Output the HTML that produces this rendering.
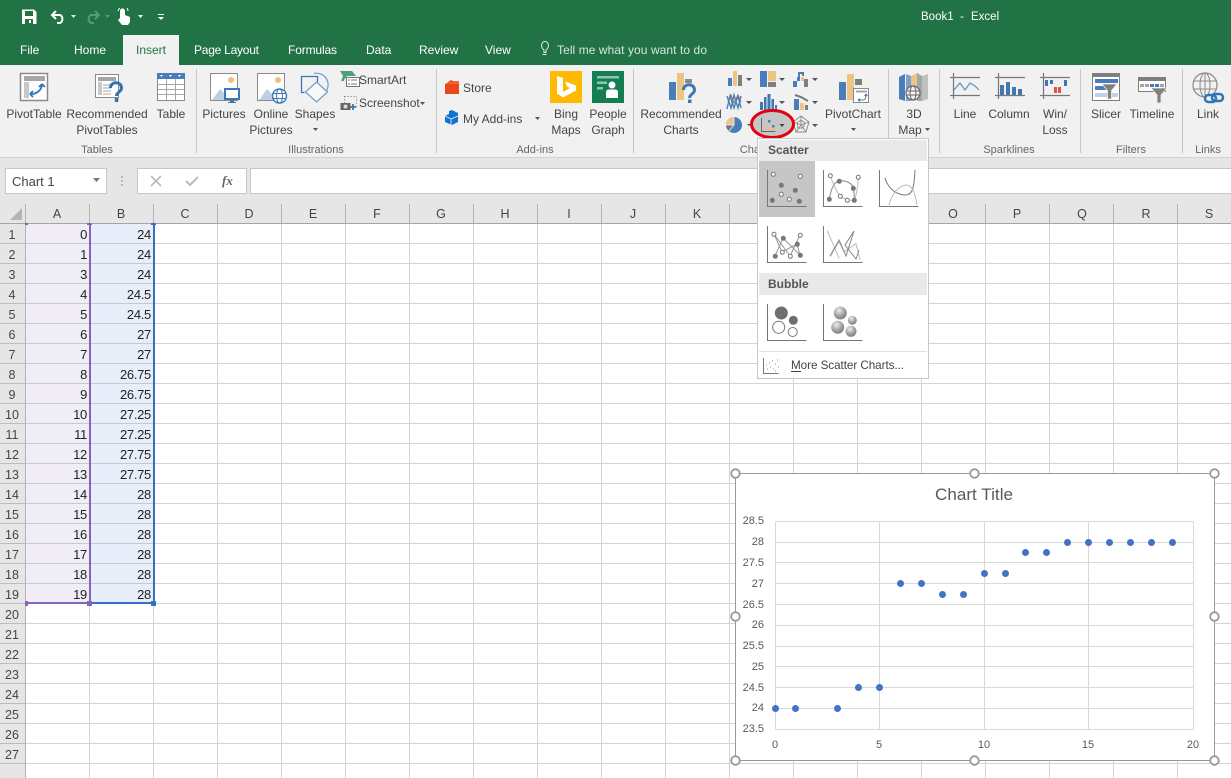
<!DOCTYPE html>
<html><head><meta charset="utf-8"><title>Book1 - Excel</title>
<style>
html,body{margin:0;padding:0;background:#fff;overflow:hidden}
svg{display:block;font-family:"Liberation Sans",sans-serif}
.r{font-size:12px;fill:#444}
.m{text-anchor:middle}
.g{font-size:11px;fill:#666;text-anchor:middle}
.t{font-size:12px;fill:#fff}
.h{font-size:12.5px;fill:#444;text-anchor:middle}
.rn{font-size:12.5px;fill:#444;text-anchor:middle}
.c{font-size:13px;fill:#222;text-anchor:end;letter-spacing:-.3px}
.y{font-size:11px;fill:#595959;text-anchor:end}
.x{font-size:11px;fill:#595959;text-anchor:middle}
.ar{fill:#555}
</style></head><body>
<svg width="1231" height="778" viewBox="0 0 1231 778" xmlns="http://www.w3.org/2000/svg">
<defs>
<radialGradient id="b3" cx=".4" cy=".3" r=".8"><stop offset="0" stop-color="#eee"/><stop offset=".6" stop-color="#999"/><stop offset="1" stop-color="#777"/></radialGradient>
</defs>
<rect width="1231" height="778" fill="#fff"/>
<!-- title bar -->
<rect width="1231" height="65" fill="#217346"/>
<rect x="123" y="35" width="56" height="30" fill="#f1f1f1"/>
<!-- QAT -->
<path d="M22 9.500h12l2.500 2.500v12h-14.500z" fill="#fff"/><rect x="25" y="11" width="8" height="5" fill="#217346"/><rect x="25" y="19" width="8" height="5" fill="#217346"/><rect x="29" y="20" width="2" height="3" fill="#fff"/>
<path d="M53 15h7a4.500 4.500 0 0 1 0 8h-3M56 11l-4 4 4 4" fill="none" stroke="#fff" stroke-width="2"/>
<path d="M71 15h5l-2.500 3z" fill="#dfeee6"/>
<path d="M98 15h-7a4.500 4.500 0 0 0 0 8h3M95 11l4 4-4 4" fill="none" stroke="#5b9a78" stroke-width="2"/>
<path d="M105 15h5l-2.500 3z" fill="#5b9a78"/>
<path d="M120 18v-7a2.500 2.500 0 0 1 5 0v4l5 2v5l-2 3h-6l-4-5z" fill="#fff"/><path d="M118 11a5 5 0 0 1 2-3M127 8a5 5 0 0 1 1 3" stroke="#fff" fill="none"/>
<path d="M138 15h5l-2.500 3z" fill="#fff"/>
<rect x="158" y="14" width="6" height="1" fill="#fff"/><path d="M158 17h6l-3 3z" fill="#fff"/>
<text x="921" y="20" font-size="11.500" fill="#fff">Book1</text><text x="960" y="20" font-size="11.500" fill="#fff">-</text><text x="971" y="20" font-size="11.500" fill="#fff">Excel</text>
<text class="t" x="20" y="54">File</text>
<text class="t" x="74" y="54">Home</text>
<text x="151" y="54" font-size="12" fill="#217346" text-anchor="middle">Insert</text>
<text class="t" x="194" y="54" textLength="65">Page Layout</text>
<text class="t" x="288" y="54" textLength="49">Formulas</text>
<text class="t" x="366" y="54">Data</text>
<text class="t" x="419" y="54">Review</text>
<text class="t" x="485" y="54">View</text>
<path d="M544.500 53v-2.500c-4-3-2.500-8.500 1-8.500s5 5.500 1 8.500V53z M543 55h4" fill="none" stroke="#dfeee6" transform="translate(-.5 -.5)"/>
<text x="557" y="54" font-size="12" fill="#d5e6dc" textLength="150">Tell me what you want to do</text>
<!-- ribbon -->
<rect y="65" width="1231" height="92" fill="#f1f1f1"/>
<rect y="157" width="1231" height="47" fill="#e6e6e6"/>
<rect y="157" width="1231" height="1" fill="#d2d2d2"/>
<path d="M196.500 69v84M436.500 69v84M633.500 69v84M888.500 69v84M939.500 69v84M1080.500 69v84M1182.500 69v84" stroke="#c6c6c6"/>
<!-- ribbon labels -->
<g class="r">
<text class="r m" x="34" y="118">PivotTable</text>
<text class="r m" x="107" y="118">Recommended</text><text class="r m" x="107" y="134">PivotTables</text>
<text class="r m" x="171" y="118">Table</text>
<text class="r m" x="224" y="118">Pictures</text>
<text class="r m" x="271" y="118">Online</text><text class="r m" x="271" y="134">Pictures</text>
<text class="r m" x="315" y="118">Shapes</text>
<text class="r" x="359" y="84">SmartArt</text>
<text class="r" x="359" y="107">Screenshot</text>
<text class="r" x="463" y="92">Store</text>
<text class="r" x="463" y="123">My Add-ins</text>
<text class="r m" x="566" y="118">Bing</text><text class="r m" x="566" y="134">Maps</text>
<text class="r m" x="608" y="118">People</text><text class="r m" x="608" y="134">Graph</text>
<text class="r m" x="681" y="118">Recommended</text><text class="r m" x="681" y="134">Charts</text>
<text class="r m" x="853" y="118">PivotChart</text>
<text class="r m" x="914" y="118">3D</text><text class="r m" x="910" y="134">Map</text>
<text class="r m" x="965" y="118">Line</text>
<text class="r m" x="1009" y="118">Column</text>
<text class="r m" x="1055" y="118">Win/</text><text class="r m" x="1055" y="134">Loss</text>
<text class="r m" x="1106" y="118">Slicer</text>
<text class="r m" x="1152" y="118">Timeline</text>
<text class="r m" x="1208" y="118">Link</text>
</g>
<text class="g" x="97" y="153">Tables</text>
<text class="g" x="316" y="153">Illustrations</text>
<text class="g" x="535" y="153">Add-ins</text>
<text class="g" x="756" y="153">Charts</text>
<text class="g" x="1009" y="153">Sparklines</text>
<text class="g" x="1131" y="153">Filters</text>
<text class="g" x="1208" y="153">Links</text>
<!-- small arrows -->
<path class="ar" d="M313 128h5l-2.500 3zM420 102h5l-2.500 3zM535 117h5l-2.500 3zM851 128h5l-2.500 3zM925 128h5l-2.500 3zM746 78h6l-3 3zM779 78h6l-3 3zM812 78h6l-3 3zM746 101h6l-3 3zM779 101h6l-3 3zM812 101h6l-3 3zM747 124h4l-2 2zM812 124h6l-3 3z"/>
<!-- PivotTable -->
<rect x="20.500" y="73.500" width="27" height="27" fill="#fff" stroke="#8a8a8a" stroke-width="1.500"/>
<rect x="24" y="76" width="21" height="5" fill="#a6a6a6"/><rect x="24" y="82" width="5" height="16" fill="#c8c8c8"/>
<path d="M31 94c5 0 10-3 11-9M30 94l3-3M30 94l3 3M42 84l-3 3M42 84l3 3" fill="none" stroke="#2e75b6" stroke-width="1.800"/>
<!-- Recommended Pivot -->
<rect x="95.500" y="74.500" width="23" height="23" fill="#fff" stroke="#8a8a8a"/>
<rect x="98" y="77" width="18" height="4" fill="#a6a6a6"/><rect x="98" y="82" width="4" height="13" fill="#c8c8c8"/><path d="M103 85h10M103 88h8M103 91h8M103 94h8" stroke="#a6a6a6"/>
<path d="M110.500 88c0-7 11-7 11 0 0 4-5 4-5 8" fill="none" stroke="#2e75b6" stroke-width="3"/><rect x="114.800" y="98" width="3.500" height="4" fill="#2e75b6"/>
<!-- Table -->
<rect x="157.500" y="73.500" width="27" height="27" fill="#fff" stroke="#8a8a8a"/>
<rect x="157" y="73" width="28" height="6" fill="#4a7ebb"/><path d="M160 75h3l-1.500 2zM169 75h3l-1.500 2zM178 75h3l-1.500 2z" fill="#fff"/>
<path d="M158 84.500h26M158 89.500h26M158 94.500h26M166.500 79v21M175.500 79v21" stroke="#a6a6a6"/>
<!-- Pictures -->
<rect x="210.500" y="73.500" width="27" height="27" fill="#fff" stroke="#8a8a8a"/>
<circle cx="231" cy="80" r="3" fill="#ecbf7c"/><path d="M212 100l8-11 5 5 2 2v4z" fill="#bccfe4"/>
<rect x="225" y="89" width="14" height="10" fill="#fff" stroke="#3f77b5" stroke-width="2"/><rect x="230" y="100" width="4" height="2" fill="#3f77b5"/><rect x="228" y="102" width="8" height="1" fill="#3f77b5"/>
<!-- Online -->
<rect x="257.500" y="73.500" width="27" height="27" fill="#fff" stroke="#8a8a8a"/>
<circle cx="278" cy="80" r="3" fill="#ecbf7c"/><path d="M259 100l8-11 5 5 2 2v4z" fill="#bccfe4"/>
<circle cx="279.500" cy="96" r="7" fill="#fff" stroke="#3f77b5" stroke-width="1.400"/><ellipse cx="279.500" cy="96" rx="3" ry="7" fill="none" stroke="#3f77b5"/><path d="M272.500 93.500h14M272.500 98.500h14" stroke="#3f77b5"/>
<!-- Shapes -->
<path d="M314 73.500a11.500 11.500 0 0 1 11.500 18.500" fill="none" stroke="#6d9bcf" stroke-width="1.200"/>
<path d="M317.500 82v-5.500H301.500V92.500h3" fill="none" stroke="#3f77b5" stroke-width="1.300"/>
<path d="M316.500 82l11 10-11 10-11-10z" fill="#f8f8f8" stroke="#6d9bcf" stroke-width="1.200"/>
<!-- SmartArt -->
<path d="M340 71h12l4 5h-9l-3 4v1h-3l2-5z" fill="#4aa37d"/>
<rect x="346.500" y="77.500" width="13" height="9" fill="#fff" stroke="#777"/><path d="M348 80h2M351 80h6M348 84h2M351 84h6" stroke="#777"/>
<!-- Screenshot -->
<rect x="344.500" y="96.500" width="12" height="11" fill="none" stroke="#999" stroke-dasharray="1.500 1.500"/>
<rect x="340.500" y="103" width="10" height="7" fill="#666"/><circle cx="345.500" cy="106.500" r="2" fill="#ddd"/><path d="M353 104v6M350 107h6" stroke="#3f77b5" stroke-width="1.800"/>
<!-- Store -->
<path d="M445 84h14v10h-14z" fill="#e8481c"/><path d="M445 84l5-3h9v3z" fill="#f2673a"/><path d="M449 83c0-3 4-3 4 0" fill="none" stroke="#e8481c"/>
<!-- Add-ins -->
<path d="M452 110l6 3v9l-6 3-7-3v-6l4-2v-3z" fill="#0f74d1"/><path d="M445 116l6 3v6M451 119l7-3" stroke="#f1f1f1" fill="none" stroke-width=".8"/>
<!-- Bing -->
<rect x="550" y="71" width="32" height="32" fill="#ffb900"/>
<path d="M557 76l6 2v14l7-4-3-1.500-2-5 11 4v5l-13 7-6-4z" fill="#fff"/>
<!-- People -->
<rect x="592" y="71" width="32" height="32" fill="#147d52"/>
<path d="M597 76h22v2.500h-22zM597 81.500h10v2.500h-10zM597 87h6v2.500h-6z" fill="#8fc7ae"/>
<circle cx="612" cy="85" r="3.500" fill="#fff"/><path d="M606 98v-6c0-2 2-2.500 3-2.500h6c1 0 3 .5 3 2.500v6z" fill="#fff"/>
<!-- Recommended Charts -->
<rect x="669" y="82" width="7" height="18" fill="#4a7ebb"/><rect x="677" y="73" width="7" height="27" fill="#ecc583"/><rect x="685" y="79" width="7" height="4" fill="#8a8a8a"/>
<path d="M683.500 90c0-7 11-7 11 0 0 4-5 4-5 8" fill="none" stroke="#3f77b5" stroke-width="3"/><rect x="688" y="99.500" width="3.500" height="3.500" fill="#3f77b5"/>
<!-- mini charts row 1 -->
<rect x="728" y="78" width="4" height="8" fill="#4a7ebb"/><rect x="733" y="71" width="4" height="15" fill="#ecc583"/><rect x="738" y="75" width="4" height="11" fill="#7f7f7f"/>
<rect x="760" y="71" width="7" height="16" fill="#4a7ebb"/><rect x="768" y="71" width="8" height="10" fill="#ecc583"/><rect x="768" y="82" width="8" height="5" fill="#7f7f7f"/>
<rect x="793" y="81" width="4" height="6" fill="#4a7ebb"/><rect x="797" y="77" width="3" height="4" fill="#4a7ebb"/><path d="M799 78v-5h4v3" fill="none" stroke="#4a7ebb" stroke-width="2"/><rect x="801" y="77" width="3" height="4" fill="#ecc583"/><rect x="804" y="79" width="4" height="8" fill="#7f7f7f"/>
<!-- row 2 -->
<path d="M727 109l3-13 4 12 4-12 3 12M727 96l4 12 3-13 4 13 3-12" fill="none" stroke="#4a7ebb" stroke-width="1.400"/><path d="M728 102l3-7 3 8 4-8 3 7" fill="none" stroke="#777"/>
<rect x="760" y="102" width="3" height="8" fill="#3f77b5"/><rect x="764" y="97" width="2.500" height="13" fill="#3f77b5"/><rect x="767.500" y="94" width="3" height="16" fill="#3f77b5"/><rect x="771.500" y="99" width="2.500" height="11" fill="#3f77b5"/><rect x="775" y="105" width="2" height="5" fill="#3f77b5"/>
<rect x="794" y="99" width="5" height="11" fill="#4a7ebb"/><rect x="800" y="103" width="4" height="7" fill="#ecc583"/><rect x="805" y="105" width="3" height="5" fill="#7f7f7f"/><path d="M795 95l6 2 7 4" fill="none" stroke="#777" stroke-width="2"/>
<!-- pie -->
<circle cx="734" cy="125" r="8" fill="#4a7ebb"/><path d="M734 125V117a8 8 0 0 0-8 8z" fill="#ecc583"/><path d="M734 125l-7.500 1.500a8 8 0 0 0 3 4.500z" fill="#777"/><path d="M734 125V117M734 125h-8M734 125l-5 6" stroke="#fff" stroke-width=".7"/>
<!-- radar -->
<path d="M801 116l8 6-3 10h-10l-3-10z M801 120l4 3-2 5h-5l-1-5z M801 116v9M809 122l-8 3M806 132l-5-7M796 132l5-7M793 122l8 3" fill="none" stroke="#888" stroke-width=".9"/>
<!-- scatter highlighted -->
<ellipse cx="772.500" cy="124" rx="21" ry="13.500" fill="#c6c6c6" stroke="#e3000f" stroke-width="3"/>
<path d="M761.500 118v13.500h14" fill="none" stroke="#666"/>
<rect x="768" y="120" width="2.500" height="2.500" fill="#4a7ebb"/><rect x="772" y="125" width="2.500" height="2.500" fill="#4a7ebb"/><rect x="764" y="126" width="2.500" height="2.500" fill="#ecbf7c"/><rect x="768" y="127" width="2.500" height="2.500" fill="#ecbf7c"/><rect x="771" y="128" width="2.500" height="2.500" fill="#ecbf7c"/>
<path d="M779.500 124h5l-2.500 3z" fill="#444"/>
<!-- PivotChart -->
<rect x="839" y="82" width="7" height="18" fill="#4a7ebb"/><rect x="847" y="74" width="7" height="26" fill="#ecc583"/><rect x="855" y="79" width="7" height="6" fill="#7f7f7f"/>
<rect x="853.500" y="88.500" width="15" height="14" fill="#fff" stroke="#8a8a8a"/><path d="M856 90.500h11v2h-11z" fill="#a6a6a6"/><path d="M858 100h5c2 0 3-2 3-5M858 100l2-1.500M858 100l2 1.500M866 94l-1.500 2M866 94l1.500 2" stroke="#3f77b5" fill="none"/>
<!-- 3D map -->
<path d="M899 77l6-3v27l-6-2z" fill="#4a7ebb"/><path d="M906 74l5 2v25l-5 0z" fill="#7f9fc5"/><path d="M911 76l6-3v20l-6 0z" fill="#ecc583"/><path d="M917 73l5 3v25h-5z" fill="#a6a6a6"/><path d="M922 76l6-2v25l-6 2z" fill="#c0c0c0"/>
<circle cx="913" cy="93" r="7" fill="#f1f1f1" stroke="#666" stroke-width="1.200"/><ellipse cx="913" cy="93" rx="3" ry="7" fill="none" stroke="#666"/><path d="M906 91h14M906 95h14" stroke="#666"/>
<!-- Sparklines -->
<path d="M950 77.500h30M950 95.500h30M953.500 73v26" stroke="#777" stroke-width="1.200"/>
<path d="M954 90l6-7 5 7 5-7 5 3 4 4" fill="none" stroke="#5b8ec7" stroke-width="1.200"/>
<path d="M995 77.500h30M995 95.500h30M998.500 73v26" stroke="#777" stroke-width="1.200"/>
<rect x="1000" y="85" width="4" height="10" fill="#3f77b5"/><rect x="1006" y="82" width="4" height="13" fill="#3f77b5"/><rect x="1012" y="87" width="4" height="8" fill="#3f77b5"/><rect x="1018" y="89" width="4" height="6" fill="#3f77b5"/>
<path d="M1040 77.500h30M1040 95.500h30M1043.500 73v26" stroke="#777" stroke-width="1.200"/>
<rect x="1045" y="80" width="3" height="6" fill="#3f77b5"/><rect x="1050" y="80" width="3" height="4" fill="#3f77b5"/><rect x="1054" y="87" width="3" height="6" fill="#d9583b"/><rect x="1058" y="87" width="3" height="6" fill="#d9583b"/><rect x="1064" y="80" width="3" height="6" fill="#3f77b5"/>
<!-- Slicer -->
<rect x="1092.500" y="73.500" width="27" height="27" fill="#fff" stroke="#7f7f7f"/><rect x="1092" y="73" width="28" height="4" fill="#7f7f7f"/>
<rect x="1095" y="79" width="23" height="4" fill="#4a7ebb"/><rect x="1095" y="86" width="13" height="4" fill="#4a7ebb"/><rect x="1095" y="93" width="23" height="4" fill="#bcd2ea"/>
<path d="M1102 84h15l-5.500 6.500V99h-4v-8.500z" fill="#7f7f7f" stroke="#f1f1f1" stroke-width=".8"/>
<!-- Timeline -->
<rect x="1138.500" y="77.500" width="27" height="14" fill="#fff" stroke="#7f7f7f"/><rect x="1138" y="77" width="28" height="4" fill="#7f7f7f"/>
<rect x="1140" y="84" width="4" height="3" fill="#a6a6a6"/><rect x="1145" y="84" width="4" height="3" fill="#a6a6a6"/><rect x="1150" y="84" width="4" height="3" fill="#4a7ebb"/><rect x="1155" y="84" width="4" height="3" fill="#4a7ebb"/><rect x="1160" y="84" width="4" height="3" fill="#a6a6a6"/>
<path d="M1151 88h16l-6 7v8h-4v-8z" fill="#7f7f7f" stroke="#f1f1f1" stroke-width=".8"/>
<!-- Link -->
<circle cx="1205" cy="85" r="12" fill="none" stroke="#8a8a8a" stroke-width="1.200"/><ellipse cx="1205" cy="85" rx="5" ry="12" fill="none" stroke="#8a8a8a"/><path d="M1193 81h24M1193 89h24M1205 73v24" stroke="#8a8a8a"/>
<rect x="1205" y="95" width="11" height="7" rx="3.500" fill="#f1f1f1" stroke="#2e75b6" stroke-width="2.500"/><rect x="1212" y="94" width="11" height="7" rx="3.500" fill="none" stroke="#2e75b6" stroke-width="2.500"/>
<!-- formula bar -->
<rect x="5.500" y="168.500" width="101" height="25" fill="#fff" stroke="#c6c6c6"/>
<text x="12" y="186" font-size="13" fill="#444">Chart 1</text>
<path d="M93 178h7l-3.500 4z" fill="#777"/>
<path d="M122 176v2M122 180v2M122 184v2" stroke="#aaa" stroke-width="1.500"/>
<rect x="137.500" y="168.500" width="109" height="25" fill="#fff" stroke="#c6c6c6"/>
<path d="M151 176l10 10M161 176l-10 10" stroke="#bbb" stroke-width="1.600"/>
<path d="M186 181l4 4 8-8" fill="none" stroke="#bbb" stroke-width="2"/>
<text x="222" y="185" font-family="Liberation Serif" font-size="13" font-style="italic" font-weight="bold" fill="#666">fx</text>
<rect x="250.500" y="168.500" width="981" height="25" fill="#fff" stroke="#c6c6c6"/>
<!-- sheet -->
<rect y="204" width="1231" height="20" fill="#e6e6e6"/>
<rect y="204" width="25" height="574" fill="#e6e6e6"/>
<path d="M10 220L22 208v12z" fill="#b5b5b5"/>
<rect x="26" y="224" width="63" height="379" fill="#f0edf7"/>
<rect x="90" y="224" width="63" height="379" fill="#e8eef9"/>
<path d="M25.500 204V778M89.500 204v20M153.500 204v20M217.500 204v20M281.500 204v20M345.500 204v20M409.500 204v20M473.500 204v20M537.500 204v20M601.500 204v20M665.500 204v20M729.500 204v20M793.500 204v20M857.500 204v20M921.500 204v20M985.500 204v20M1049.500 204v20M1113.500 204v20M1177.500 204v20" stroke="#b3b3b3"/>
<path d="M0 223.500H1231" stroke="#a5a5a5"/>
<path d="M89.500 224V778M153.500 224V778M217.500 224V778M281.500 224V778M345.500 224V778M409.500 224V778M473.500 224V778M537.500 224V778M601.500 224V778M665.500 224V778M729.500 224V778M793.500 224V778M857.500 224V778M921.500 224V778M985.500 224V778M1049.500 224V778M1113.500 224V778M1177.500 224V778" stroke="#d4d4d4"/>
<path d="M26 243.500H1231M26 263.500H1231M26 283.500H1231M26 303.500H1231M26 323.500H1231M26 343.500H1231M26 363.500H1231M26 383.500H1231M26 403.500H1231M26 423.500H1231M26 443.500H1231M26 463.500H1231M26 483.500H1231M26 503.500H1231M26 523.500H1231M26 543.500H1231M26 563.500H1231M26 583.500H1231M26 603.500H1231M26 623.500H1231M26 643.500H1231M26 663.500H1231M26 683.500H1231M26 703.500H1231M26 723.500H1231M26 743.500H1231M26 763.500H1231" stroke="#d4d4d4"/>
<path d="M26 243.500H153M26 263.500H153M26 283.500H153M26 303.500H153M26 323.500H153M26 343.500H153M26 363.500H153M26 383.500H153M26 403.500H153M26 423.500H153M26 443.500H153M26 463.500H153M26 483.500H153M26 503.500H153M26 523.500H153M26 543.500H153M26 563.500H153M26 583.500H153" stroke="#c8c8d0"/>
<path d="M0 243.500H25M0 263.500H25M0 283.500H25M0 303.500H25M0 323.500H25M0 343.500H25M0 363.500H25M0 383.500H25M0 403.500H25M0 423.500H25M0 443.500H25M0 463.500H25M0 483.500H25M0 503.500H25M0 523.500H25M0 543.500H25M0 563.500H25M0 583.500H25M0 603.500H25M0 623.500H25M0 643.500H25M0 663.500H25M0 683.500H25M0 703.500H25M0 723.500H25M0 743.500H25M0 763.500H25" stroke="#bcbcbc"/>
<!-- col labels -->
<text class="h" x="57" y="218">A</text><text class="h" x="121" y="218">B</text><text class="h" x="185" y="218">C</text><text class="h" x="249" y="218">D</text><text class="h" x="313" y="218">E</text><text class="h" x="377" y="218">F</text><text class="h" x="441" y="218">G</text><text class="h" x="505" y="218">H</text><text class="h" x="569" y="218">I</text><text class="h" x="633" y="218">J</text><text class="h" x="697" y="218">K</text><text class="h" x="953" y="218">O</text><text class="h" x="1017" y="218">P</text><text class="h" x="1082" y="218">Q</text><text class="h" x="1146" y="218">R</text><text class="h" x="1209" y="218">S</text>
<!-- row labels -->
<text class="rn" x="12" y="239">1</text><text class="rn" x="12" y="259">2</text><text class="rn" x="12" y="279">3</text><text class="rn" x="12" y="299">4</text><text class="rn" x="12" y="319">5</text><text class="rn" x="12" y="339">6</text><text class="rn" x="12" y="359">7</text><text class="rn" x="12" y="379">8</text><text class="rn" x="12" y="399">9</text><text class="rn" x="12" y="419">10</text><text class="rn" x="12" y="439">11</text><text class="rn" x="12" y="459">12</text><text class="rn" x="12" y="479">13</text><text class="rn" x="12" y="499">14</text><text class="rn" x="12" y="519">15</text><text class="rn" x="12" y="539">16</text><text class="rn" x="12" y="559">17</text><text class="rn" x="12" y="579">18</text><text class="rn" x="12" y="599">19</text><text class="rn" x="12" y="619">20</text><text class="rn" x="12" y="639">21</text><text class="rn" x="12" y="659">22</text><text class="rn" x="12" y="679">23</text><text class="rn" x="12" y="699">24</text><text class="rn" x="12" y="719">25</text><text class="rn" x="12" y="739">26</text><text class="rn" x="12" y="759">27</text>
<!-- cells -->
<text class="c" x="87" y="239">0</text><text class="c" x="87" y="259">1</text><text class="c" x="87" y="279">3</text><text class="c" x="87" y="299">4</text><text class="c" x="87" y="319">5</text><text class="c" x="87" y="339">6</text><text class="c" x="87" y="359">7</text><text class="c" x="87" y="379">8</text><text class="c" x="87" y="399">9</text><text class="c" x="87" y="419">10</text><text class="c" x="87" y="439">11</text><text class="c" x="87" y="459">12</text><text class="c" x="87" y="479">13</text><text class="c" x="87" y="499">14</text><text class="c" x="87" y="519">15</text><text class="c" x="87" y="539">16</text><text class="c" x="87" y="559">17</text><text class="c" x="87" y="579">18</text><text class="c" x="87" y="599">19</text>
<text class="c" x="151" y="239">24</text><text class="c" x="151" y="259">24</text><text class="c" x="151" y="279">24</text><text class="c" x="151" y="299">24.5</text><text class="c" x="151" y="319">24.5</text><text class="c" x="151" y="339">27</text><text class="c" x="151" y="359">27</text><text class="c" x="151" y="379">26.75</text><text class="c" x="151" y="399">26.75</text><text class="c" x="151" y="419">27.25</text><text class="c" x="151" y="439">27.25</text><text class="c" x="151" y="459">27.75</text><text class="c" x="151" y="479">27.75</text><text class="c" x="151" y="499">28</text><text class="c" x="151" y="519">28</text><text class="c" x="151" y="539">28</text><text class="c" x="151" y="559">28</text><text class="c" x="151" y="579">28</text><text class="c" x="151" y="599">28</text>
<!-- selection -->
<rect x="89" y="224" width="2" height="380" fill="#8763bd"/>
<rect x="153" y="224" width="2" height="380" fill="#366fc6"/>
<rect x="26" y="602" width="63" height="2" fill="#8763bd"/>
<rect x="91" y="602" width="62" height="2" fill="#366fc6"/>
<rect x="25" y="601" width="3" height="5" fill="#8763bd"/><rect x="87" y="601" width="5" height="5" fill="#8763bd"/><rect x="151" y="601" width="5" height="5" fill="#366fc6"/>
<rect x="25" y="223" width="3" height="2" fill="#8763bd"/><rect x="87" y="223" width="5" height="2" fill="#8763bd"/><rect x="151" y="223" width="5" height="2" fill="#366fc6"/>
<!-- chart -->
<rect x="735.500" y="473.500" width="479" height="287" fill="#fff" stroke="#999" stroke-width="1"/>
<text x="974" y="500" font-size="17" fill="#595959" text-anchor="middle" textLength="78">Chart Title</text>
<path d="M775.500 521.500H1193.500M775.500 542.500H1193.500M775.500 562.500H1193.500M775.500 583.500H1193.500M775.500 604.500H1193.500M775.500 625.500H1193.500M775.500 646.500H1193.500M775.500 666.500H1193.500M775.500 687.500H1193.500M775.500 708.500H1193.500M775.500 729.500H1193.500" stroke="#d9d9d9"/>
<path d="M775.500 521.500V729.500M879.500 521.500V729.500M984.500 521.500V729.500M1088.500 521.500V729.500M1193.500 521.500V729.500" stroke="#d9d9d9"/>
<text class="y" x="764" y="524">28.5</text><text class="y" x="764" y="545">28</text><text class="y" x="764" y="566">27.5</text><text class="y" x="764" y="587">27</text><text class="y" x="764" y="608">26.5</text><text class="y" x="764" y="628">26</text><text class="y" x="764" y="649">25.5</text><text class="y" x="764" y="670">25</text><text class="y" x="764" y="691">24.5</text><text class="y" x="764" y="711">24</text><text class="y" x="764" y="732">23.5</text>
<text class="x" x="775" y="748">0</text><text class="x" x="879" y="748">5</text><text class="x" x="984" y="748">10</text><text class="x" x="1088" y="748">15</text><text class="x" x="1193" y="748">20</text>
<g fill="#4472c4">
<circle cx="775.500" cy="708.500" r="3.500"/><circle cx="795.500" cy="708.500" r="3.500"/><circle cx="837.500" cy="708.500" r="3.500"/><circle cx="858.500" cy="687.500" r="3.500"/><circle cx="879.500" cy="687.500" r="3.500"/><circle cx="900.500" cy="583.500" r="3.500"/><circle cx="921.500" cy="583.500" r="3.500"/><circle cx="942.500" cy="594.500" r="3.500"/><circle cx="963.500" cy="594.500" r="3.500"/><circle cx="984.500" cy="573.500" r="3.500"/><circle cx="1005.500" cy="573.500" r="3.500"/><circle cx="1025.500" cy="552.500" r="3.500"/><circle cx="1046.500" cy="552.500" r="3.500"/><circle cx="1067.500" cy="542.500" r="3.500"/><circle cx="1088.500" cy="542.500" r="3.500"/><circle cx="1109.500" cy="542.500" r="3.500"/><circle cx="1130.500" cy="542.500" r="3.500"/><circle cx="1151.500" cy="542.500" r="3.500"/><circle cx="1172.500" cy="542.500" r="3.500"/>
</g>
<g fill="#fff" stroke="#999" stroke-width="1.800">
<circle cx="735.500" cy="473.500" r="4.300"/><circle cx="974.500" cy="473.500" r="4.300"/><circle cx="1214.500" cy="473.500" r="4.300"/><circle cx="735.500" cy="616.500" r="4.300"/><circle cx="1214.500" cy="616.500" r="4.300"/><circle cx="735.500" cy="760.500" r="4.300"/><circle cx="974.500" cy="760.500" r="4.300"/><circle cx="1214.500" cy="760.500" r="4.300"/>
</g>
<!-- dropdown menu -->
<rect x="757.500" y="138.500" width="171" height="240" fill="#fff" stroke="#c6c6c6"/>
<rect x="759" y="140" width="168" height="21" fill="#e9e9e9"/>
<text x="768" y="154" font-size="12" font-weight="bold" fill="#555">Scatter</text>
<rect x="759" y="161" width="56" height="56" fill="#c6c6c6"/>
<path d="M767.500 170v36.500h39M823.500 170v36.500h39M879.500 170v36.500h39M767.500 226v36.500h39M823.500 226v36.500h39M767.500 304v36.500h39M823.500 304v36.500h39" fill="none" stroke="#777"/>
<g fill="#777"><circle cx="781.300" cy="185.300" r="2.500"/><circle cx="795.300" cy="190.300" r="2.500"/><circle cx="772.300" cy="200.300" r="2.500"/><circle cx="799.300" cy="201.300" r="2.500"/></g>
<g fill="#fff" stroke="#777"><circle cx="773.300" cy="174.300" r="2"/><circle cx="800.300" cy="176.300" r="2"/><circle cx="781.300" cy="194.300" r="2"/><circle cx="789.300" cy="199.300" r="2"/></g>
<path d="M829.300 199c2-12 6-18 10-18 6-1 13 2 14 7 1 4 1 8 1 12" fill="none" stroke="#888"/>
<path d="M830.300 176c3 8 6 16 10 20 3 3 10 5 14 4 2-4 4-15 4-23" fill="none" stroke="#bbb"/>
<g fill="#777"><circle cx="839.300" cy="181.300" r="2.500"/><circle cx="853.300" cy="188.300" r="2.500"/><circle cx="829.300" cy="199.300" r="2.500"/><circle cx="854.300" cy="200.300" r="2.500"/></g>
<g fill="#fff" stroke="#777"><circle cx="830.300" cy="175.700" r="2"/><circle cx="858.300" cy="177.300" r="2"/><circle cx="840.300" cy="196.300" r="2"/><circle cx="847.300" cy="200.300" r="2"/></g>
<path d="M885 178c3 10 10 16 19 17 7 0 10-2 11-25" fill="none" stroke="#777"/>
<path d="M889 205c3-12 10-19 17-20 6 0 9 7 11 20" fill="none" stroke="#bbb"/>
<path d="M775 256l8-18 17 17-3-11-15 8-8-18 16 22 10-21" fill="none" stroke="#999"/>
<g fill="#777"><circle cx="783.300" cy="238.300" r="2.500"/><circle cx="797.300" cy="244.300" r="2.500"/><circle cx="775.300" cy="256.300" r="2.500"/><circle cx="800.300" cy="255.300" r="2.500"/></g>
<g fill="#fff" stroke="#777"><circle cx="774" cy="234.300" r="2"/><circle cx="800.300" cy="235.300" r="2"/><circle cx="782.300" cy="252.300" r="2"/><circle cx="790.300" cy="256.300" r="2"/></g>
<path d="M827.300 230.700l12 28M830 256.700l9-15 5 10 12-8 4 16" fill="none" stroke="#bbb"/>
<path d="M830 256l9-16 7 16 8-25-9 14 11 14 3-9" fill="none" stroke="#888"/>
<rect x="759" y="273" width="168" height="22" fill="#e9e9e9"/>
<text x="768" y="288" font-size="12" font-weight="bold" fill="#555">Bubble</text>
<circle cx="781.300" cy="313" r="6.500" fill="#6f6f6f"/><circle cx="793.300" cy="320.300" r="4.500" fill="#6f6f6f"/><circle cx="778.700" cy="327.300" r="6" fill="#fff" stroke="#777"/><circle cx="792.700" cy="332" r="4.500" fill="#fff" stroke="#777"/>
<circle cx="840.300" cy="313" r="6.500" fill="url(#b3)"/><circle cx="852.300" cy="320.300" r="4.500" fill="url(#b3)"/><circle cx="837.700" cy="327.300" r="6.500" fill="url(#b3)"/><circle cx="851" cy="331.300" r="5.500" fill="url(#b3)"/>
<rect x="759" y="351" width="168" height="1" fill="#e1e1e1"/>
<path d="M763.500 358v15.500h15" fill="none" stroke="#777"/>
<path d="M767 369h.8M770 367h.8M773 369h.8M769 363h.8M772 361h.8M775 364h.8M777 360h.8M766 365h.8M775 371h.8M778 367h.8" stroke="#777"/>
<text x="791" y="369" font-size="11.700" fill="#444" textLength="113">More Scatter Charts...</text>
<rect x="791" y="371" width="10" height="1" fill="#444"/>
</svg>
</body></html>
